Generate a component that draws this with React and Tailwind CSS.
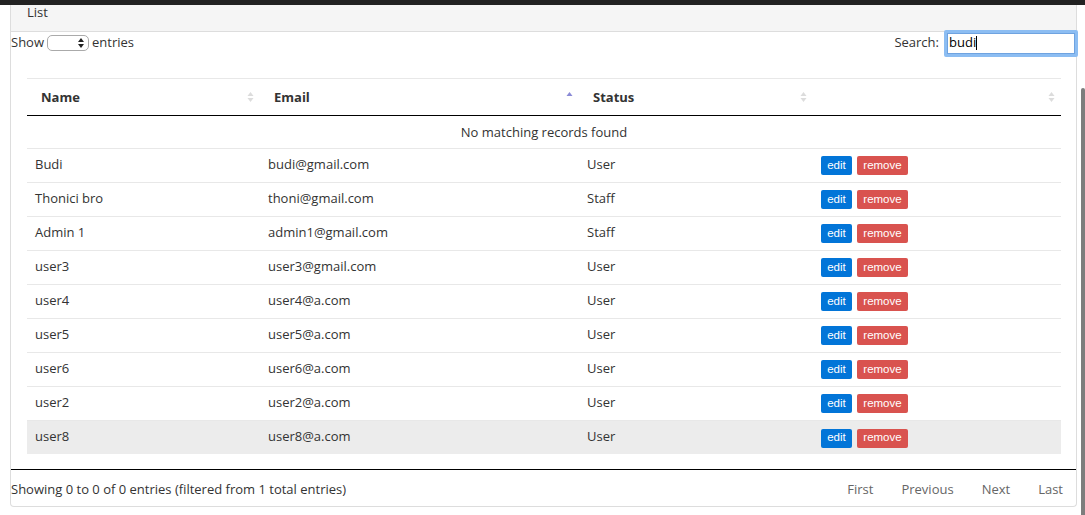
import React from "react";

const rows = [
  ["Budi", "budi@gmail.com", "User"],
  ["Thonici bro", "thoni@gmail.com", "Staff"],
  ["Admin 1", "admin1@gmail.com", "Staff"],
  ["user3", "user3@gmail.com", "User"],
  ["user4", "user4@a.com", "User"],
  ["user5", "user5@a.com", "User"],
  ["user6", "user6@a.com", "User"],
  ["user2", "user2@a.com", "User"],
  ["user8", "user8@a.com", "User"],
];

function SortIcon({ active }) {
  return (
    <svg width="7" height="12" viewBox="0 0 7 12" className="shrink-0">
      <polygon points="3.5,1 6.5,5 0.5,5" fill={active ? "#8a8ad6" : "#dcdcdc"} />
      {!active && <polygon points="3.5,11 6.5,7 0.5,7" fill="#dcdcdc" />}
    </svg>
  );
}

function Th({ label, width, active }) {
  return (
    <th className={`${width} h-[37px] pl-[14px] pr-[6px] text-left font-bold border-b-[1.5px] border-black`}>
      <div className="flex items-center justify-between pt-[1px]">
        <span>{label}</span>
        <SortIcon active={active} />
      </div>
    </th>
  );
}

export default function App() {
  return (
    <div
      className="relative w-[1085px] h-[515px] overflow-hidden bg-white text-[13px] text-[#333]"
      style={{ fontFamily: '"Open Sans", "Liberation Sans", sans-serif' }}
    >
      <div className="h-[5px] bg-[#222]" />
      <div className="ml-[10px] w-[1067px] h-[502px] border-x border-b border-[#ddd] rounded-b-[4px] flex flex-col">
        <div className="h-[27px] bg-[#f5f5f5] border-b border-[#ddd] pl-[16px] leading-none pt-[1px]">
          List
        </div>
        <div className="flex items-start justify-between h-[47px]">
          <div className="flex items-center pt-[2px] h-[18px] mt-[1px]">
            <span>Show</span>
            <div className="ml-[3px] w-[42px] h-[16px] border border-[#aaa] rounded-[5px] flex items-center justify-end pr-[4px]">
              <svg width="6" height="10" viewBox="0 0 6 10">
                <polygon points="3,0 6,4 0,4" fill="#222" />
                <polygon points="3,10 6,6 0,6" fill="#222" />
              </svg>
            </div>
            <span className="ml-[3px]">entries</span>
          </div>
          <div className="flex items-center -mt-[2px] -mr-[2px]">
            <span className="mr-[5px]">Search:</span>
            <div className="w-[134px] h-[27px] border-[3px] border-[#8cbdf2] rounded-[2px] bg-white flex items-center">
              <div className="w-full h-full border border-[#6fa3e0] flex items-center pl-[1px] text-black">
                budi<span className="inline-block w-px h-[14px] bg-black" />
              </div>
            </div>
          </div>
        </div>
        <div className="px-[16px]">
          <table className="w-[1034px] border-collapse border-t border-[#e8e8e8] table-fixed">
            <thead>
              <tr>
                <Th label="Name" width="w-[233px]" />
                <Th label="Email" width="w-[319px]" active />
                <Th label="Status" width="w-[234px]" />
                <Th label="" width="w-[248px]" />
              </tr>
            </thead>
            <tbody>
              <tr>
                <td colSpan={4} className="h-[33px] text-center pt-[2px]">
                  No matching records found
                </td>
              </tr>
              {rows.map((r, i) => (
                <tr key={i} className={i === rows.length - 1 ? "bg-[#ececec]" : ""}>
                  <td className="h-[34px] pl-[8px] pb-[2px] border-t border-[#e8e8e8]">{r[0]}</td>
                  <td className="pl-[8px] pb-[2px] border-t border-[#e8e8e8]">{r[1]}</td>
                  <td className="pl-[8px] pb-[2px] border-t border-[#e8e8e8]">{r[2]}</td>
                  <td className="pl-[8px] border-t border-[#e8e8e8]">
                    <div
                      className="flex gap-[5px] text-[11.5px] text-white leading-none pt-[1px]"
                      style={{ fontFamily: '"Liberation Sans", Arial, sans-serif' }}
                    >
                      <span className="w-[31px] h-[19px] rounded-[2px] bg-[#0275d8] flex items-center justify-center">edit</span>
                      <span className="w-[51px] h-[19px] rounded-[2px] bg-[#d9534f] flex items-center justify-center">remove</span>
                    </div>
                  </td>
                </tr>
              ))}
            </tbody>
          </table>
        </div>
        <div className="mt-[15px] border-t-[1.5px] border-black flex items-center justify-between h-[37px] pt-[3px]">
          <span>Showing 0 to 0 of 0 entries (filtered from 1 total entries)</span>
          <div className="flex items-center text-[#666] pr-[13px] gap-[28px]">
            <span>First</span>
            <span>Previous</span>
            <span>Next</span>
            <span>Last</span>
          </div>
        </div>
      </div>
      <div className="absolute right-0 top-[88px] w-[4px] h-[440px] bg-[#7d7d7d] rounded-t-[2px]" />
    </div>
  );
}
